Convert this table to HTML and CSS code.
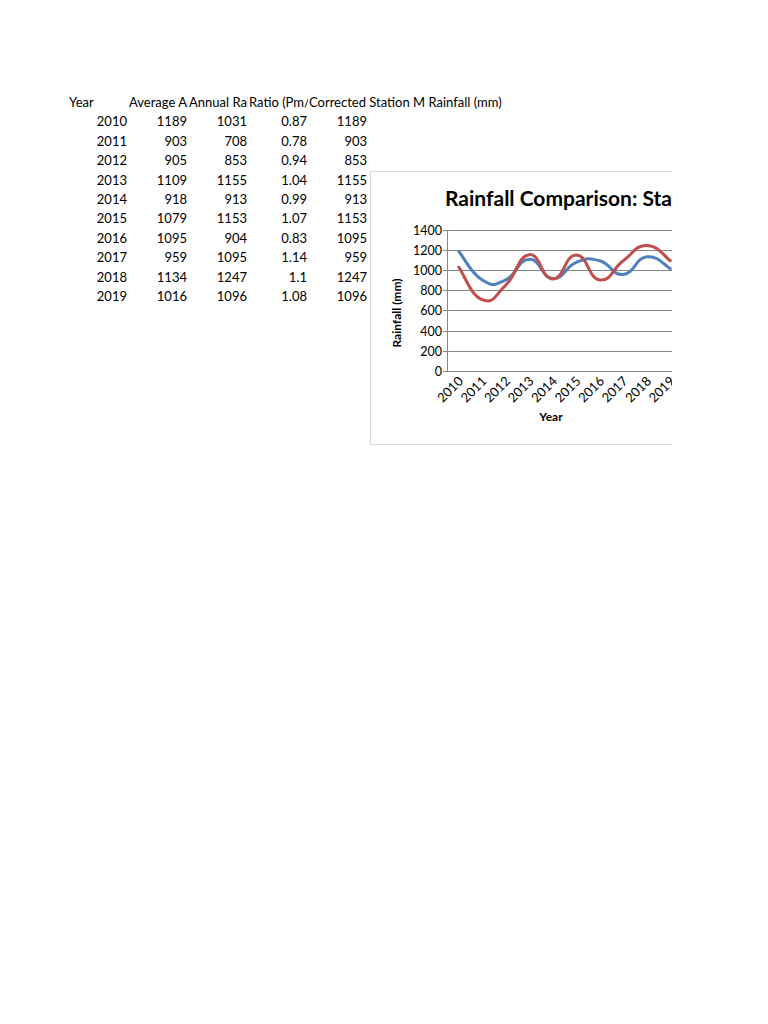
FILE: index.html
```html
<!DOCTYPE html>
<html lang="en">
<head>
    <meta charset="UTF-8">
    <meta name="viewport" content="width=device-width, initial-scale=1.0">
    <title>Rainfall Comparison</title>
    <link rel="stylesheet" href="styles.css">
</head>
<body>
    <div class="sheet">
        <div class="data-grid">
            <div class="cell">Year</div>
            <div class="cell">Average Annual Rainfall (mm)</div>
            <div class="cell">Annual Rainfall Station M (mm)</div>
            <div class="cell">Ratio (Pm/Pa)</div>
            <div class="cell spill">Corrected Station M Rainfall (mm)</div>

            <div class="cell num">2010</div><div class="cell num">1189</div><div class="cell num">1031</div><div class="cell num">0.87</div><div class="cell num">1189</div>
            <div class="cell num">2011</div><div class="cell num">903</div><div class="cell num">708</div><div class="cell num">0.78</div><div class="cell num">903</div>
            <div class="cell num">2012</div><div class="cell num">905</div><div class="cell num">853</div><div class="cell num">0.94</div><div class="cell num">853</div>
            <div class="cell num">2013</div><div class="cell num">1109</div><div class="cell num">1155</div><div class="cell num">1.04</div><div class="cell num">1155</div>
            <div class="cell num">2014</div><div class="cell num">918</div><div class="cell num">913</div><div class="cell num">0.99</div><div class="cell num">913</div>
            <div class="cell num">2015</div><div class="cell num">1079</div><div class="cell num">1153</div><div class="cell num">1.07</div><div class="cell num">1153</div>
            <div class="cell num">2016</div><div class="cell num">1095</div><div class="cell num">904</div><div class="cell num">0.83</div><div class="cell num">1095</div>
            <div class="cell num">2017</div><div class="cell num">959</div><div class="cell num">1095</div><div class="cell num">1.14</div><div class="cell num">959</div>
            <div class="cell num">2018</div><div class="cell num">1134</div><div class="cell num">1247</div><div class="cell num">1.1</div><div class="cell num">1247</div>
            <div class="cell num">2019</div><div class="cell num">1016</div><div class="cell num">1096</div><div class="cell num">1.08</div><div class="cell num">1096</div>
        </div>

        <div class="chart-clip">
            <div class="chart">
                <svg class="chart-svg" width="478" height="272" viewBox="371 172 478 272">
                    <text class="chart-title" x="445" y="206">Rainfall Comparison: Station M vs Average</text>

                    <!-- gridlines, 200 mm apart -->
                    <g class="grid">
                        <line x1="443" y1="230.5" x2="682" y2="230.5"/>
                        <line x1="443" y1="250.5" x2="682" y2="250.5"/>
                        <line x1="443" y1="270.5" x2="682" y2="270.5"/>
                        <line x1="443" y1="290.5" x2="682" y2="290.5"/>
                        <line x1="443" y1="310.5" x2="682" y2="310.5"/>
                        <line x1="443" y1="331.5" x2="682" y2="331.5"/>
                        <line x1="443" y1="351.5" x2="682" y2="351.5"/>
                        <line x1="443" y1="371.5" x2="682" y2="371.5"/>
                        <line x1="447.5" y1="230" x2="447.5" y2="372"/>
                    </g>

                    <g class="y-labels">
                        <text x="442" y="235">1400</text>
                        <text x="442" y="255">1200</text>
                        <text x="442" y="275">1000</text>
                        <text x="442" y="295">800</text>
                        <text x="442" y="315">600</text>
                        <text x="442" y="335.5">400</text>
                        <text x="442" y="355.5">200</text>
                        <text x="442" y="375.5">0</text>
                    </g>

                    <g class="x-labels">
                        <text transform="translate(464 382) rotate(-45)">2010</text>
                        <text transform="translate(487.5 382) rotate(-45)">2011</text>
                        <text transform="translate(511 382) rotate(-45)">2012</text>
                        <text transform="translate(534.5 382) rotate(-45)">2013</text>
                        <text transform="translate(558 382) rotate(-45)">2014</text>
                        <text transform="translate(581.5 382) rotate(-45)">2015</text>
                        <text transform="translate(605 382) rotate(-45)">2016</text>
                        <text transform="translate(628.5 382) rotate(-45)">2017</text>
                        <text transform="translate(652 382) rotate(-45)">2018</text>
                        <text transform="translate(675.5 382) rotate(-45)">2019</text>
                    </g>

                    <text class="axis-title" transform="translate(401 313) rotate(-90)">Rainfall (mm)</text>
                    <text class="axis-title" x="551" y="421">Year</text>

                    <!-- average rainfall -->
                    <path class="series-blue" d="M458.75 251.25 C464.63 258.45 470.5 272.91 482.25 280.06 C494 287.21 494 285.04 505.75 279.85 C517.5 274.66 517.5 259.64 529.25 259.31 C541 258.98 541 277.79 552.75 278.54 C564.5 279.3 564.5 266.79 576.25 262.33 C588 257.88 588 257.7 599.75 260.72 C611.5 263.74 611.5 275.4 623.25 274.42 C635 273.44 635 258.23 646.75 256.79 C658.5 255.35 664.38 265.7 670.25 268.67"/>
                    <!-- station M -->
                    <path class="series-red" d="M458.75 267.16 C464.63 275.29 470.5 295.21 482.25 299.69 C494 304.17 494 296.34 505.75 285.09 C517.5 273.84 517.5 256.19 529.25 254.68 C541 253.17 541 279 552.75 279.05 C564.5 279.1 564.5 254.66 576.25 254.88 C588 255.11 588 278.49 599.75 279.95 C611.5 281.41 611.5 269.36 623.25 260.72 C635 252.09 635 245.44 646.75 245.41 C658.5 245.39 664.38 256.82 670.25 260.62"/>
                </svg>
            </div>
        </div>
    </div>
</body>
</html>
```

FILE: styles.css
```css
:root {
    --text-dark: #000000;
    --chart-border: #d9d9d9;
    --grid-line: #868686;
    --series-blue: #4f81bd;
    --series-red: #c0504d;
}

body {
    margin: 0;
    background: #ffffff;
    font-family: Lato, "Open Sans", sans-serif;
    color: var(--text-dark);
}

.sheet {
    display: flex;
    align-items: flex-start;
    padding: 93px 0 0 68px;
}

.data-grid {
    display: grid;
    grid-template-columns: repeat(5, 60px);
    grid-auto-rows: 19.4px;
    font-size: 13px;
    line-height: 19.4px;
}

.cell {
    padding: 0 1px;
    white-space: nowrap;
    overflow: hidden;
}

.cell.num {
    text-align: right;
}

.cell.spill {
    overflow: visible;
}

.chart-clip {
    width: 302px;
    margin: 78px 0 0 2px;
    overflow: hidden;
}

.chart {
    width: 480px;
    height: 274px;
    border: 1px solid var(--chart-border);
    box-sizing: border-box;
    background: #ffffff;
}

.chart-svg {
    display: block;
    font-family: Lato, "Open Sans", sans-serif;
}

.chart-title {
    font-size: 21px;
    font-weight: bold;
    fill: #000000;
}

.grid line {
    stroke: var(--grid-line);
    stroke-width: 1;
}

.y-labels text {
    font-size: 12.5px;
    text-anchor: end;
    fill: #000000;
}

.x-labels text {
    font-size: 13px;
    text-anchor: end;
    fill: #000000;
}

.axis-title {
    font-size: 12px;
    font-weight: bold;
    text-anchor: middle;
    fill: #000000;
}

.series-blue,
.series-red {
    fill: none;
    stroke-width: 3;
    stroke-linecap: round;
}

.series-blue {
    stroke: var(--series-blue);
}

.series-red {
    stroke: var(--series-red);
}
```
